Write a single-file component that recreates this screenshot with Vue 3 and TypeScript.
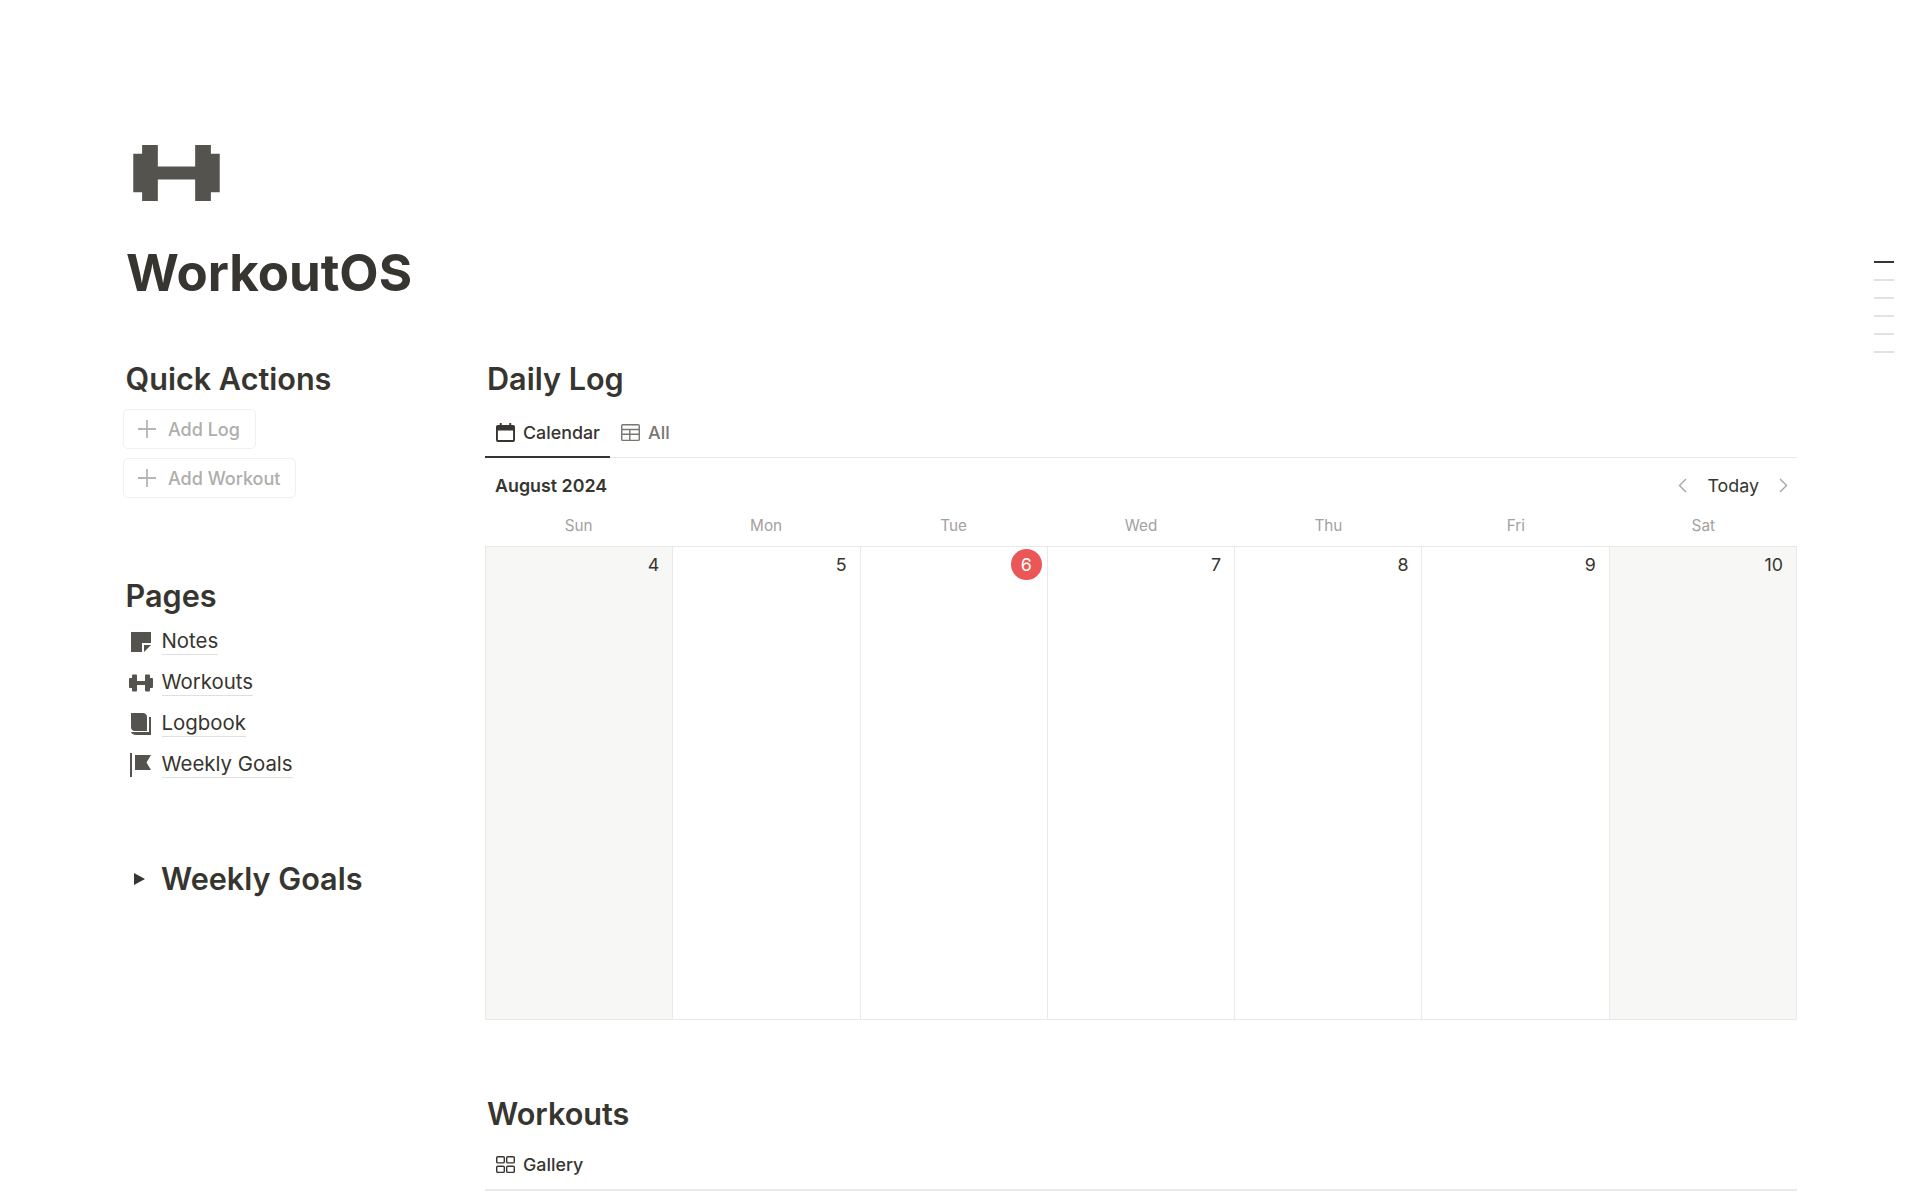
<script setup lang="ts">
const days = [
  { name: 'Sun', num: 4, weekend: true },
  { name: 'Mon', num: 5 },
  { name: 'Tue', num: 6, today: true },
  { name: 'Wed', num: 7 },
  { name: 'Thu', num: 8 },
  { name: 'Fri', num: 9 },
  { name: 'Sat', num: 10, weekend: true },
]
</script>

<template>
  <div class="page">
    <svg class="page-icon" viewBox="0 0 88 57" aria-hidden="true">
      <path d="M9 0h16v22h38V0h16v9h9v39h-9v9H63V35H25v22H9v-9H0V9h9z" />
    </svg>
    <h1 class="title">WorkoutOS</h1>

    <div class="columns">
      <aside class="side">
        <h2 class="heading">Quick Actions</h2>
        <div class="actions">
          <button class="action">
            <svg viewBox="0 0 18 18"><path d="M8.100 0h1.800v8.100H18v1.800H9.900V18H8.100V9.900H0V8.100h8.100z" /></svg>
            Add Log
          </button>
          <button class="action">
            <svg viewBox="0 0 18 18"><path d="M8.100 0h1.800v8.100H18v1.800H9.900V18H8.100V9.900H0V8.100h8.100z" /></svg>
            Add Workout
          </button>
        </div>

        <h2 class="heading pages-heading">Pages</h2>
        <ul class="links">
          <li>
            <span class="link-icon">
              <svg viewBox="0 0 26 24"><path d="M3 2h20v11h-9v9H3zM16 15h7l-7 7z" /></svg>
            </span>
            <a class="link">Notes</a>
          </li>
          <li>
            <span class="link-icon">
              <svg viewBox="0 0 26 24"><path d="M4 4.500a1 1 0 0 1 1-1h3a1 1 0 0 1 1 1V10h8V4.500a1 1 0 0 1 1-1h3a1 1 0 0 1 1 1V7h2a1 1 0 0 1 1 1v8a1 1 0 0 1-1 1h-2v2.500a1 1 0 0 1-1 1h-3a1 1 0 0 1-1-1V14H9v5.500a1 1 0 0 1-1 1H5a1 1 0 0 1-1-1V17H2a1 1 0 0 1-1-1V8a1 1 0 0 1 1-1h2z" /></svg>
            </span>
            <a class="link">Workouts</a>
          </li>
          <li>
            <span class="link-icon">
              <svg viewBox="0 0 26 24"><path d="M3 1h12c2 0 4 1.500 4 4v14H7c-2.500 0-4-1.500-4-4zM21 5h2v18H8c-2 0-4-.8-5-3h18z" /></svg>
            </span>
            <a class="link">Logbook</a>
          </li>
          <li>
            <span class="link-icon">
              <svg viewBox="0 0 26 24"><path d="M2 0h2v24H2zM7 2h16l-4.500 7.500L23 17H7z" /></svg>
            </span>
            <a class="link">Weekly Goals</a>
          </li>
        </ul>

        <div class="toggle">
          <svg class="caret" viewBox="0 0 11 12"><path d="M0 0l11 6-11 6z" /></svg>
          <h2 class="heading toggle-heading">Weekly Goals</h2>
        </div>
      </aside>

      <main class="content">
        <h2 class="heading db-heading">Daily Log</h2>
        <div class="tabs">
          <div class="tab active">
            <svg viewBox="0 0 20 20"><path d="M4 0h2v2h8V0h2v2h2a2 2 0 0 1 2 2v14a2 2 0 0 1-2 2H2a2 2 0 0 1-2-2V4a2 2 0 0 1 2-2h2zM2 8v10h16V8z" /></svg>
            Calendar
          </div>
          <div class="tab muted">
            <svg viewBox="0 0 20 18"><path d="M2 0h16a2 2 0 0 1 2 2v14a2 2 0 0 1-2 2H2a2 2 0 0 1-2-2V2a2 2 0 0 1 2-2zm0 1.500a.5.5 0 0 0-.5.5v3h17V2a.5.5 0 0 0-.5-.5zM1.500 6.500v3.500h7V6.500zm8.500 0v3.500h8.500V6.500zM1.500 11.500V16a.5.5 0 0 0 .5.5h6.500v-5zm8.500 0v5h8a.5.5 0 0 0 .5-.5v-4.500z" /></svg>
            All
          </div>
        </div>

        <div class="cal-bar">
          <span class="month">August 2024</span>
          <div class="cal-nav">
            <svg viewBox="0 0 9 15"><path d="M8 1L1.500 7.500 8 14" /></svg>
            <span>Today</span>
            <svg viewBox="0 0 9 15"><path d="M1 1l6.500 6.500L1 14" /></svg>
          </div>
        </div>

        <div class="week-names">
          <span v-for="d in days" :key="d.name">{{ d.name }}</span>
        </div>
        <div class="week">
          <div v-for="d in days" :key="d.num" class="cell" :class="{ weekend: d.weekend }">
            <span class="num" :class="{ today: d.today }">{{ d.num }}</span>
          </div>
        </div>

        <h2 class="heading workouts-heading">Workouts</h2>
        <div class="tabs gallery-tabs">
          <div class="tab">
            <svg viewBox="0 0 20 18"><path d="M2 0h5.500a2 2 0 0 1 2 2v4a2 2 0 0 1-2 2H2a2 2 0 0 1-2-2V2a2 2 0 0 1 2-2zm0 1.500a.5.5 0 0 0-.5.5v4a.5.5 0 0 0 .5.5h5.500A.5.5 0 0 0 8 6V2a.5.5 0 0 0-.5-.5zM12.500 0H18a2 2 0 0 1 2 2v4a2 2 0 0 1-2 2h-5.500a2 2 0 0 1-2-2V2a2 2 0 0 1 2-2zm0 1.500A.5.5 0 0 0 12 2v4a.5.5 0 0 0 .5.5H18a.5.5 0 0 0 .5-.5V2a.5.500 0 0 0-.5-.5zM2 10h5.500a2 2 0 0 1 2 2v4a2 2 0 0 1-2 2H2a2 2 0 0 1-2-2v-4a2 2 0 0 1 2-2zm0 1.500a.5.5 0 0 0-.5.5v4a.5.5 0 0 0 .5.5h5.500A.5.5 0 0 0 8 16v-4a.5.5 0 0 0-.5-.5zM12.500 10H18a2 2 0 0 1 2 2v4a2 2 0 0 1-2 2h-5.500a2 2 0 0 1-2-2v-4a2 2 0 0 1 2-2zm0 1.500a.5.5 0 0 0-.5.5v4a.5.5 0 0 0 .5.5H18a.5.5 0 0 0 .5-.5v-4a.5.5 0 0 0-.5-.5z" /></svg>
            Gallery
          </div>
        </div>
      </main>
    </div>

    <div class="toc" aria-hidden="true">
      <i class="on"></i><i></i><i></i><i></i><i></i><i></i>
    </div>
  </div>
</template>

<style scoped>
.page {
  box-sizing: border-box;
  height: 1199px;
  overflow: hidden;
  padding: 145px 123px 0;
  color: #37352f;
  font-family: Inter, "Liberation Sans", sans-serif;
  background: #fff;
}

.page-icon {
  display: block;
  width: 87px;
  height: 56px;
  margin-left: 10px;
  fill: #55534e;
}

.title {
  margin: 42px 0 0 3px;
  font-size: 51px;
  line-height: 60px;
  font-weight: 700;
}

.columns {
  display: grid;
  grid-template-columns: 362px 1312px;
  margin-top: 56px;
}

.heading {
  margin: 0 0 0 2.5px;
  font-size: 30.6px;
  line-height: 39px;
  font-weight: 600;
}

.actions {
  display: flex;
  flex-direction: column;
  align-items: flex-start;
  gap: 9px;
  margin-top: 11px;
}

.action {
  display: flex;
  align-items: center;
  gap: 12px;
  height: 40px;
  padding: 0 15px 0 14px;
  border: 1px solid #f0f0ef;
  border-radius: 5px;
  background: #fff;
  color: #aeaeab;
  font: 500 18px Inter, "Liberation Sans", sans-serif;
}

.action svg {
  width: 18px;
  height: 18px;
  fill: #b5b5b2;
}

.pages-heading {
  margin-top: 78px;
}

.links {
  list-style: none;
  margin: 6px 0 0;
  padding: 0 0 0 5px;
}

.links li {
  display: flex;
  align-items: center;
  gap: 7.5px;
  height: 41px;
}

.link-icon {
  display: flex;
  width: 26px;
}

.link-icon svg {
  width: 26px;
  height: 24px;
  fill: #55534e;
}

.link {
  font-size: 20.4px;
  line-height: 26px;
  border-bottom: 1px solid #dfdfdd;
}

.toggle {
  display: flex;
  align-items: center;
  gap: 16px;
  margin: 74px 0 0 11px;
}

.caret {
  width: 11px;
  height: 12px;
  fill: #37352f;
}

.toggle-heading {
  margin: 0;
}

.db-heading {
  margin-left: 2px;
}

.tabs {
  display: flex;
  align-items: stretch;
  height: 46px;
  padding-bottom: 5px;
  margin-top: 14px;
  border-bottom: 1px solid #e9e9e7;
  box-sizing: border-box;
}

.tab {
  display: flex;
  align-items: center;
  gap: 8px;
  padding: 0 10px 0 11px;
  font-size: 17.85px;
  font-weight: 500;
  color: #37352f;
}

.tab svg {
  width: 19px;
  height: 19px;
  fill: currentColor;
}

.tab.active {
  position: relative;
}

.tab.active::after {
  content: "";
  position: absolute;
  left: 0;
  right: 0;
  bottom: -6px;
  height: 2px;
  background: #37352f;
}

.tab.muted {
  color: #787774;
}

.cal-bar {
  display: flex;
  align-items: center;
  justify-content: space-between;
  height: 54px;
  padding: 0 9px 0 10px;
}

.month {
  font-size: 17.85px;
  font-weight: 600;
}

.cal-nav {
  display: flex;
  align-items: center;
  gap: 20px;
  font-size: 17.85px;
}

.cal-nav svg {
  width: 9px;
  height: 15px;
  fill: none;
  stroke: #a5a5a2;
  stroke-width: 1.4;
}

.week-names {
  display: grid;
  grid-template-columns: repeat(7, 1fr);
  box-sizing: border-box;
  height: 34px;
  padding-bottom: 7px;
  align-items: center;
  text-align: center;
  font-size: 15.3px;
  color: #a3a29f;
}

.week {
  display: grid;
  grid-template-columns: repeat(7, 1fr);
  height: 474px;
  box-sizing: border-box;
  border: 1px solid #e9e9e7;
  border-right: 0;
}

.cell {
  display: flex;
  justify-content: flex-end;
  box-sizing: border-box;
  padding: 2px 13px 0 0;
  border-right: 1px solid #e9e9e7;
}

.cell.weekend {
  background: #f7f7f5;
}

.num {
  min-width: 31px;
  height: 31px;
  line-height: 31px;
  text-align: right;
  font-size: 17.85px;
}

.num.today {
  margin-right: -8px;
  border-radius: 50%;
  background: #eb5757;
  color: #fff;
  text-align: center;
}

.workouts-heading {
  margin: 74px 0 0 2px;
}

.gallery-tabs {
  margin-top: 10px;
  height: 48px;
  padding-bottom: 3px;
  border-bottom-width: 2px;
}

.toc {
  position: absolute;
  top: 261px;
  left: 1874px;
  display: flex;
  flex-direction: column;
  gap: 16px;
}

.toc i {
  display: block;
  width: 20px;
  height: 2px;
  background: #e3e3e1;
}

.toc i.on {
  background: #37352f;
}
</style>

<style>
html,
body {
  margin: 0;
  overflow: hidden;
}
</style>
